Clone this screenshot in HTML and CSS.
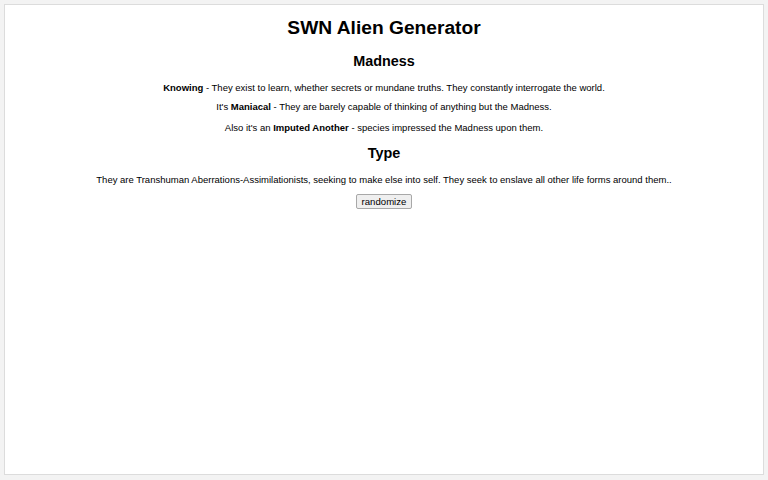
FILE: index.html
```html
<!DOCTYPE html>
<html>
<head>
<meta charset="utf-8">
<title>SWN Alien Generator</title>
<link rel="stylesheet" href="styles.css">
</head>
<body>
<div class="card">
  <h1 class="title">SWN Alien Generator</h1>
  <h2 class="section">Madness</h2>
  <p class="line first">  <b>Knowing</b> - They exist to learn, whether secrets or mundane truths. They constantly interrogate the world.</p>
  <p class="line">It's <b>Maniacal</b> - They are barely capable of thinking of anything but the Madness.</p>
  <p class="line">Also it's an <b>Imputed Another</b> - species impressed the Madness upon them.</p>
  <h2 class="section later">Type</h2>
  <p class="line last">They are Transhuman Aberrations-Assimilationists, seeking to make else into self. They seek to enslave all other life forms around them..</p>
  <div class="actions"><button class="btn">randomize</button></div>
</div>
</body>
</html>
```
FILE: styles.css
```css
html, body {
  margin: 0;
  padding: 0;
  background: #f3f3f3;
}
body {
  padding: 4px;
  box-sizing: border-box;
  height: 480px;
  font-family: "Liberation Sans", Arial, sans-serif;
  color: #000;
}
.card {
  background: #fff;
  border: 1px solid #dcdcdc;
  height: 471px;
  box-sizing: border-box;
  text-align: center;
  padding-top: 12px;
}
.title {
  font-size: 19.2px;
  font-weight: bold;
  margin: 0 0 14px;
}
.section {
  font-size: 14.4px;
  font-weight: bold;
  margin: 0 0 13px;
}
.section.later {
  margin-top: 12px;
}
.line {
  font-size: 9.5px;
  margin: 0 0 10px;
}
.line.first {
  margin-bottom: 8px;
}
.line.last {
  margin-bottom: 6px;
}
.actions {
  margin: 0;
}
.btn {
  font-family: "Liberation Sans", Arial, sans-serif;
  font-size: 9.6px;
  padding: 1px 5px;
  background: #efefef;
  border: 1px solid #a8a8a8;
  border-radius: 2px;
}
```
